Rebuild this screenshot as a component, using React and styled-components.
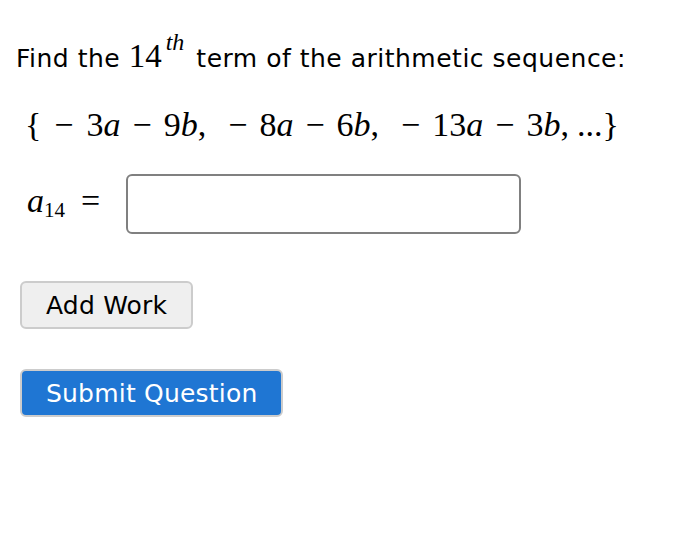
import React from "react";
import styled, { createGlobalStyle } from "styled-components";

const Global = createGlobalStyle`
  html, body { margin: 0; padding: 0; background: #fff; }
  body { font-family: "DejaVu Sans", Verdana, sans-serif; color: #000; }
`;

const Page = styled.div`
  padding: 34px 16px 0 16px;
  display: flex;
  flex-direction: column;
`;

const Prompt = styled.p`
  margin: 0;
  font-size: 25px;
  letter-spacing: 0.5px;
  line-height: 44px;
  white-space: nowrap;
`;

const MathInline = styled.span`
  font-family: "Liberation Serif", "Times New Roman", serif;
  font-size: 33px;
  letter-spacing: 0;
  margin-right: 12px;
`;

const Sup = styled.sup`
  font-style: italic;
  font-size: 24px;
  vertical-align: 0;
  position: relative;
  top: -17px;
  margin-left: 4px;
`;

const Sequence = styled.div`
  margin-top: 20px;
  padding-left: 9px;
  font-family: "Liberation Serif", "Times New Roman", serif;
  font-size: 34px;
  line-height: 48px;
  white-space: nowrap;
`;

const Var = styled.i`
  font-style: italic;
`;

const Op = styled.span`
  margin: 0 ${(p) => p.$gap ?? 12}px;
`;

const Space = styled.span`
  display: inline-block;
  width: ${(p) => p.$w}px;
`;

const AnswerRow = styled.div`
  margin-top: 25px;
  display: flex;
  align-items: center;
`;

const Label = styled.span`
  font-family: "Liberation Serif", "Times New Roman", serif;
  font-size: 34px;
  width: 110px;
  padding-left: 11px;
  padding-bottom: 6px;
  box-sizing: border-box;
  white-space: nowrap;
`;

const Sub = styled.sub`
  font-size: 21px;
  font-style: normal;
  vertical-align: -5px;
  line-height: 0;
`;

const Eq = styled.span`
  margin-left: 16px;
`;

const Input = styled.input`
  width: 395px;
  height: 60px;
  box-sizing: border-box;
  border: 2px solid #808080;
  border-radius: 6px;
  background: #fff;
  outline: none;
`;

const Button = styled.button`
  align-self: flex-start;
  margin-left: 4px;
  box-sizing: border-box;
  height: 48px;
  padding: 0 24px;
  border: 2px solid #cccccc;
  border-radius: 6px;
  font-family: "DejaVu Sans", Verdana, sans-serif;
  font-size: 25px;
  letter-spacing: 0.2px;
  background: ${(p) => (p.$primary ? "#1f76d3" : "#efefef")};
  color: ${(p) => (p.$primary ? "#fff" : "#000")};
  margin-top: ${(p) => p.$top}px;
`;

export default function App() {
  return (
    <>
      <Global />
      <Page>
        <Prompt>
          Find the <MathInline>14<Sup>th</Sup></MathInline>term of the arithmetic sequence:
        </Prompt>
        <Sequence>
          {"{"}
          <Op $gap={13}>−</Op>3<Var>a</Var>
          <Op>−</Op>9<Var>b</Var>,<Space $w={10} />
          <Op>−</Op>8<Var>a</Var>
          <Op>−</Op>6<Var>b</Var>,<Space $w={10} />
          <Op>−</Op>13<Var>a</Var>
          <Op>−</Op>3<Var>b</Var>,<Space $w={8} />
          ...{"}"}
        </Sequence>
        <AnswerRow>
          <Label>
            <Var>a</Var>
            <Sub>14</Sub>
            <Eq>=</Eq>
          </Label>
          <Input type="text" />
        </AnswerRow>
        <Button $top={47}>Add Work</Button>
        <Button $primary $top={40}>Submit Question</Button>
      </Page>
    </>
  );
}
